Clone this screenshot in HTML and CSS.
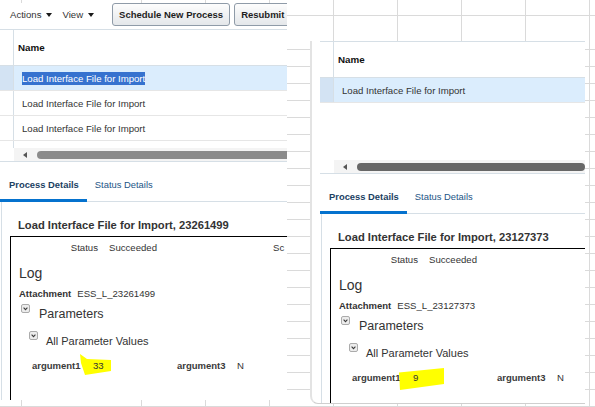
FILE: index.html
```html
<!DOCTYPE html>
<html>
<head>
<meta charset="utf-8">
<link rel="stylesheet" href="styles.css">
</head>
<body>
<div class="sheet">
  <div class="shot shot-left">
    <div class="ui">
      <div class="toolbar">
        <span class="menu">Actions<i class="caret"></i></span>
        <span class="menu">View<i class="caret"></i></span>
        <button class="btn btn-first">Schedule New Process</button>
        <button class="btn">Resubmit</button>
      </div>
      <div class="grid-head"><div class="rh"></div><div class="col-name">Name</div></div>
      <div class="grid-body">
        <div class="row selected"><div class="rh"></div><div class="cell"><span class="sel">Load Interface File for Import</span></div></div>
        <div class="row"><div class="rh"></div><div class="cell">Load Interface File for Import</div></div>
        <div class="row"><div class="rh"></div><div class="cell">Load Interface File for Import</div></div>
        <div class="row"><div class="rh"></div><div class="cell"></div></div>
      </div>
      <div class="hscroll"><div class="hs-pad"></div><div class="hs-track"><i class="hs-arrow"></i><div class="hs-thumb"></div></div></div>
      <div class="tabs"><div class="tab active">Process Details</div><div class="tab">Status Details</div></div>
      <div class="detail">
        <div class="title">Load Interface File for Import, 23261499</div>
        <div class="box">
          <div class="status-row"><span class="lbl-status">Status</span><span class="val-status">Succeeded</span><span class="lbl-sched">Sc</span></div>
          <div class="log">Log</div>
          <div class="attach"><span class="attach-lbl">Attachment</span><span>ESS_L_23261499</span></div>
          <div class="sect sect-params"><svg class="tog" width="9" height="9" viewBox="0 0 9 9"><rect x="0.5" y="0.5" width="8" height="8" rx="1.5" fill="#ececec" stroke="#ababab"/><path d="M2.6 3.7 L4.5 5.6 L6.4 3.7" fill="none" stroke="#3a3a3a" stroke-width="1.1"/></svg><span class="sect-text">Parameters</span></div>
          <div class="sect sect-all"><svg class="tog" width="9" height="9" viewBox="0 0 9 9"><rect x="0.5" y="0.5" width="8" height="8" rx="1.5" fill="#ececec" stroke="#ababab"/><path d="M2.6 3.7 L4.5 5.6 L6.4 3.7" fill="none" stroke="#3a3a3a" stroke-width="1.1"/></svg><span class="sect-text">All Parameter Values</span></div>
          <div class="args"><span class="arg-lbl">argument1</span><span class="arg-val"><span class="hl hl-a"></span><span class="arg-txt">33</span></span><span class="arg-lbl arg-lbl2">argument3</span><span class="arg-txt">N</span></div>
        </div>
      </div>
    </div>
  </div>

  <div class="shot shot-right">
    <div class="ui ui-inset">
      <div class="grid-head head-top"><div class="rh"></div><div class="col-name">Name</div></div>
      <div class="grid-body">
        <div class="row selected"><div class="rh"></div><div class="cell">Load Interface File for Import</div></div>
      </div>
      <div class="hscroll"><div class="hs-pad"></div><div class="hs-track"><i class="hs-arrow"></i><div class="hs-thumb hs-thumb-dark"></div></div></div>
      <div class="tabs"><div class="tab active">Process Details</div><div class="tab">Status Details</div></div>
      <div class="detail">
        <div class="title">Load Interface File for Import, 23127373</div>
        <div class="box">
          <div class="status-row"><span class="lbl-status">Status</span><span class="val-status">Succeeded</span></div>
          <div class="log">Log</div>
          <div class="attach"><span class="attach-lbl">Attachment</span><span>ESS_L_23127373</span></div>
          <div class="sect sect-params"><svg class="tog" width="9" height="9" viewBox="0 0 9 9"><rect x="0.5" y="0.5" width="8" height="8" rx="1.5" fill="#ececec" stroke="#ababab"/><path d="M2.6 3.7 L4.5 5.6 L6.4 3.7" fill="none" stroke="#3a3a3a" stroke-width="1.1"/></svg><span class="sect-text">Parameters</span></div>
          <div class="sect sect-all"><svg class="tog" width="9" height="9" viewBox="0 0 9 9"><rect x="0.5" y="0.5" width="8" height="8" rx="1.5" fill="#ececec" stroke="#ababab"/><path d="M2.6 3.7 L4.5 5.6 L6.4 3.7" fill="none" stroke="#3a3a3a" stroke-width="1.1"/></svg><span class="sect-text">All Parameter Values</span></div>
          <div class="args"><span class="arg-lbl">argument1</span><span class="arg-val"><span class="hl hl-b"></span><span class="arg-txt">9</span></span><span class="arg-lbl arg-lbl2">argument3</span><span class="arg-txt">N</span></div>
        </div>
      </div>
    </div>
  </div>
</div>
</body>
</html>
```

FILE: styles.css
```css
html, body {
  margin: 0;
  padding: 0;
  background: #fff;
}

.sheet {
  position: relative;
  width: 595px;
  height: 407px;
  overflow: hidden;
  background-color: #fff;
  background-image:
    linear-gradient(#dadada, #dadada),
    repeating-linear-gradient(to right, transparent 0 63px, #dadada 63px 64px),
    linear-gradient(#dadada, #dadada),
    repeating-linear-gradient(to bottom, transparent 0 16px, #dadada 16px 17px);
  background-size: 1px 100%, 520px 100%, 100% 1px, 100% 400px;
  background-position: 21px 0, 78px 0, 0 15px, 0 33px;
  background-repeat: no-repeat;
}

.shot {
  position: absolute;
  overflow: hidden;
  background: #fff;
  box-sizing: border-box;
}

.shot-left {
  left: 0;
  top: 3px;
  width: 287px;
  height: 397px;
}

.shot-right {
  left: 310px;
  top: 41px;
  width: 275px;
  height: 363px;
  border-left: 2px solid #e3e3e3;
  border-bottom: 1px solid #cfcfcf;
  border-bottom-left-radius: 8px;
}

.ui {
  width: 420px;
  font-family: "Liberation Sans", Arial, sans-serif;
  font-size: 9.6px;
  color: #333;
}

.ui-inset {
  width: 265px;
  margin-left: 8px;
}

/* toolbar */
.toolbar {
  display: flex;
  align-items: flex-start;
  height: 26px;
  border-bottom: 1px solid #d6dfe6;
  padding-left: 10px;
}

.menu {
  display: flex;
  align-items: center;
  height: 23px;
  margin-right: 10px;
  color: #333;
}

.caret {
  display: inline-block;
  width: 0;
  height: 0;
  margin-left: 5px;
  border-left: 3px solid transparent;
  border-right: 3px solid transparent;
  border-top: 4px solid #1a1a1a;
}

.btn {
  height: 23px;
  margin: 0 4px 0 0;
  padding: 0 6px;
  border: 1px solid #8f9ba8;
  border-radius: 3px;
  background: linear-gradient(#fdfdfd, #e4e7ea);
  font-family: "Liberation Sans", Arial, sans-serif;
  font-size: 9.5px;
  font-weight: bold;
  color: #1e1e1e;
  white-space: nowrap;
  flex: none;
}

.btn-first {
  margin-left: 8px;
}

/* table */
.grid-head {
  display: flex;
  height: 35px;
  border-bottom: 1px solid #d6dfe6;
}

.head-top {
  border-top: 1px solid #d6dfe6;
}

.rh {
  width: 13px;
  flex: none;
  border-right: 1px solid #d6dfe6;
}

.col-name {
  display: flex;
  align-items: center;
  padding-left: 4px;
  font-weight: bold;
  font-size: 9.8px;
  color: #111;
}

.grid-body {
  height: 82px;
  overflow: hidden;
}

.row {
  display: flex;
  height: 24px;
  border-bottom: 1px solid #e6e6e6;
}

.row .cell {
  flex: 1;
  display: flex;
  align-items: center;
  padding-left: 8px;
  color: #333;
}

.row.selected {
  background: #dbedfd;
}

.row.selected .rh {
  background: #d3e3f3;
}

.sel {
  background: #3672cf;
  color: #fff;
  padding: 1px 0;
}

/* horizontal scroll */
.hscroll {
  display: flex;
  height: 13px;
  border-bottom: 1px solid #d6dfe6;
}

.hs-pad {
  width: 14px;
  flex: none;
}

.hs-track {
  flex: 1;
  display: flex;
  align-items: center;
  background: #f4f4f4;
}

.hs-arrow {
  display: inline-block;
  width: 0;
  height: 0;
  margin-left: 9px;
  border-top: 3.5px solid transparent;
  border-bottom: 3.5px solid transparent;
  border-right: 4px solid #555;
}

.hs-thumb {
  flex: 1;
  height: 8px;
  margin-left: 10px;
  border-radius: 4px;
  background: #8b8b8b;
}

.hs-thumb-dark {
  background: #676767;
}

/* tabs */
.tabs {
  display: flex;
  height: 40px;
  box-sizing: border-box;
  border-bottom: 1px solid #d6dfe6;
}

.tab {
  height: 40px;
  box-sizing: border-box;
  padding: 16px 8px 0 8px;
  line-height: 14px;
  font-size: 9.4px;
  color: #245586;
  white-space: nowrap;
}

.tab.active {
  padding-left: 9px;
  margin-bottom: -1px;
  border-bottom: 3px solid #0572ce;
  font-weight: bold;
  color: #1c3f63;
}

/* details */
.detail {
  margin-left: 1px;
  border-left: 1px solid #d6dfe6;
  height: 220px;
}

.title {
  padding: 16px 0 0 16px;
  line-height: 14px;
  font-size: 11.2px;
  font-weight: bold;
  color: #333;
  white-space: nowrap;
}

.box {
  margin: 4px 0 0 8px;
  height: 200px;
  border-top: 1px solid #000;
  border-left: 1px solid #000;
}

.status-row {
  display: flex;
  margin-top: 4px;
  line-height: 14px;
  white-space: nowrap;
}

.lbl-status {
  width: 87px;
  text-align: right;
  flex: none;
}

.val-status {
  width: 164px;
  margin-left: 11px;
  flex: none;
}

.lbl-sched {
  color: #333;
}

.log {
  margin-top: 10px;
  padding-left: 8px;
  font-size: 14px;
  line-height: 16px;
  color: #333;
}

.attach {
  margin-top: 7px;
  padding-left: 8px;
  line-height: 12px;
  white-space: nowrap;
}

.attach-lbl {
  font-weight: bold;
  font-size: 9.5px;
  margin-right: 6px;
}

.sect {
  display: flex;
  align-items: flex-start;
  white-space: nowrap;
}

.sect-params {
  margin-top: 6px;
  padding-left: 10px;
  font-size: 12.5px;
  line-height: 16px;
}

.sect-params .tog {
  margin-top: -2px;
}

.sect-params .sect-text {
  margin-left: 9px;
}

.sect-all {
  margin-top: 12px;
  padding-left: 18px;
  font-size: 11px;
  line-height: 14px;
}

.sect-all .tog {
  margin-top: -3px;
}

.sect-all .sect-text {
  margin-left: 8px;
}

.tog {
  flex: none;
  display: block;
}

.args {
  display: flex;
  margin-top: 12px;
  padding-left: 21px;
  line-height: 12px;
  white-space: nowrap;
}

.arg-lbl {
  width: 61px;
  flex: none;
  font-weight: bold;
  font-size: 9.5px;
  color: #3a3a3a;
}

.arg-lbl2 {
  width: 60px;
}

.arg-val {
  position: relative;
  width: 84px;
  flex: none;
}

.arg-txt {
  position: relative;
}

.hl {
  position: absolute;
  background: #ffff00;
}

.hl-a {
  left: -13px;
  top: -6px;
  width: 31px;
  height: 21px;
  clip-path: polygon(0 0, 7px 5px, 31px 6px, 31px 17px, 5px 21px, 1px 9px);
}

.hl-b {
  left: -14px;
  top: -4px;
  width: 45px;
  height: 22px;
  clip-path: polygon(0 4.5px, 45px 0, 45px 16px, 1px 22px);
}
```
